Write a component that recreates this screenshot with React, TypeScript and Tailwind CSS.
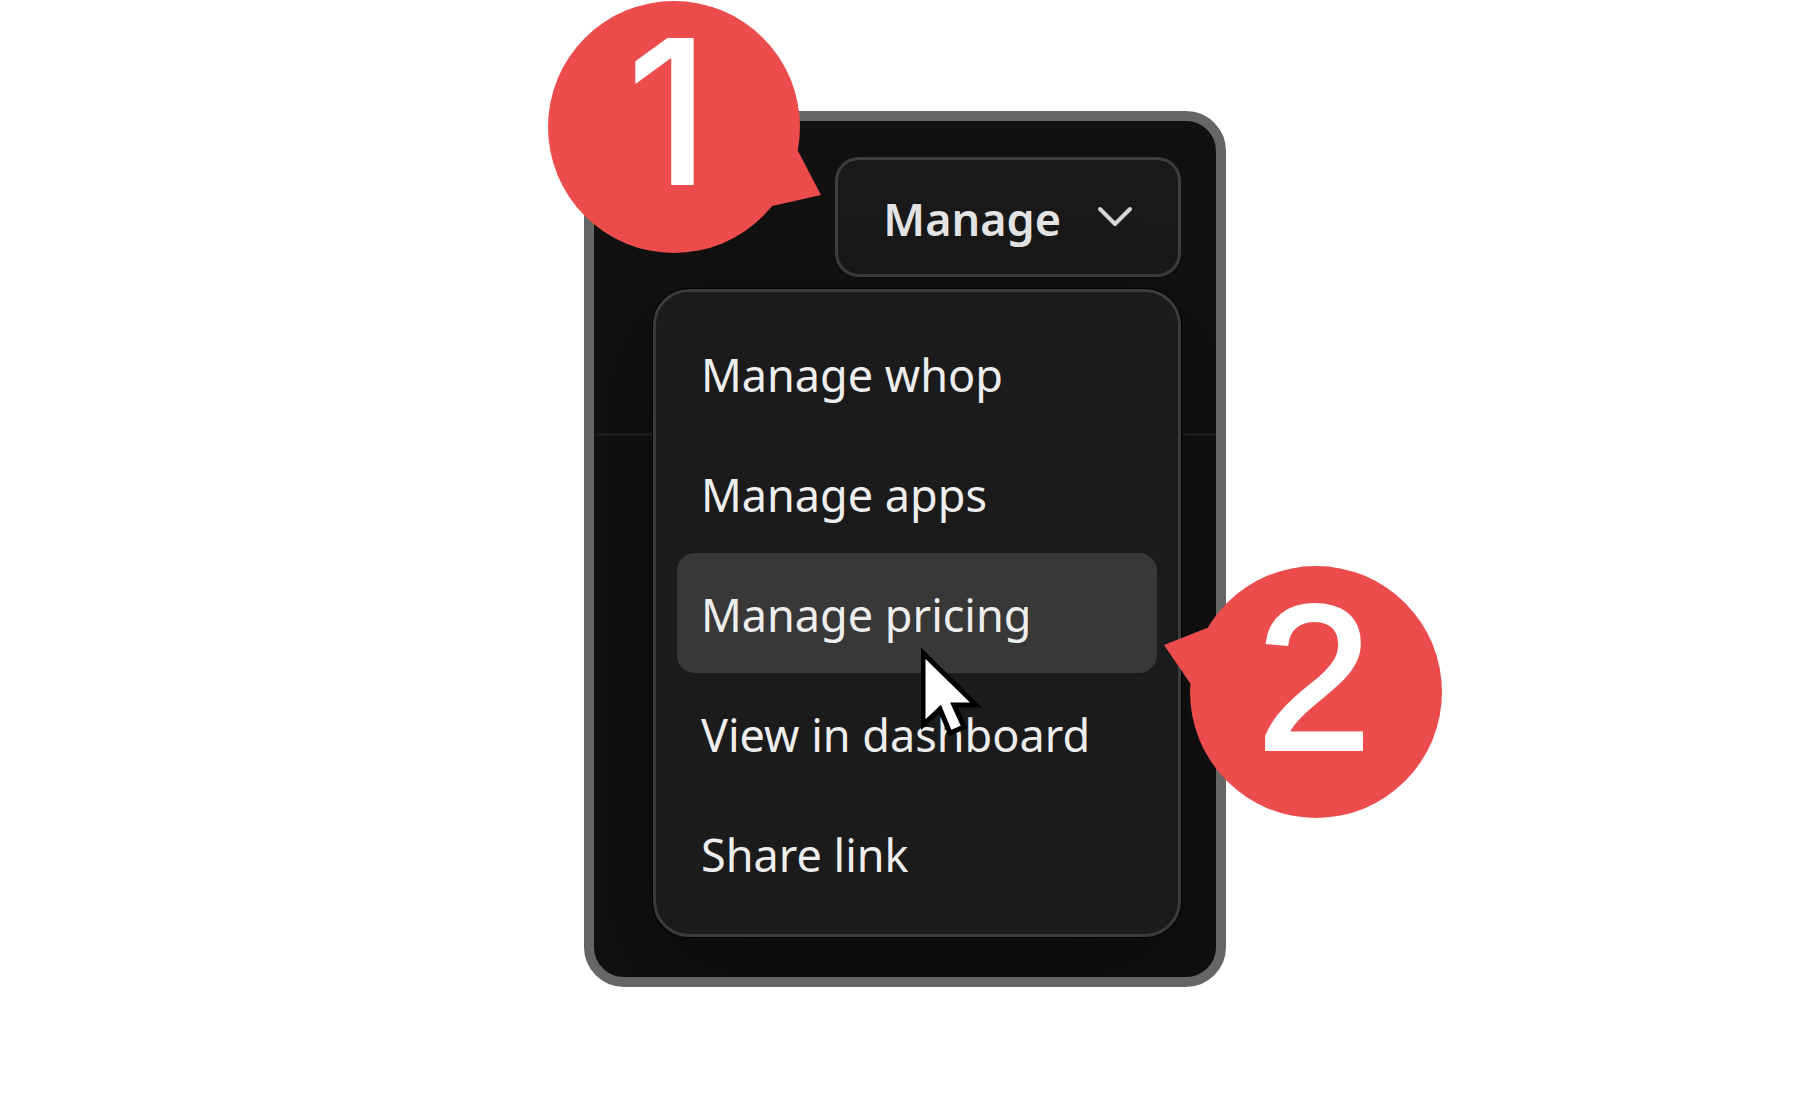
import { useState } from 'react';

const items = ['Manage whop', 'Manage apps', 'Manage pricing', 'View in dashboard', 'Share link'];

export default function App() {
  const [open, setOpen] = useState(true);
  const [active, setActive] = useState('Manage pricing');

  return (
    <main className="flex min-h-screen items-center justify-center bg-white pr-0.5 font-['Noto_Sans','Open_Sans',sans-serif]">
      <section className="relative">
        <div className="relative flex flex-col items-end gap-3 overflow-hidden rounded-[40px] border-[10px] border-[#666666] bg-[#111111] pt-9 pr-[35px] pb-10 pl-[59px]">
          <hr className="absolute inset-x-0 top-[312px] border-t-[3px] border-[#1e1e1e]" />

          <button
            type="button"
            aria-expanded={open}
            onClick={() => setOpen(!open)}
            className="flex h-[120px] items-center gap-9 rounded-3xl border-[3px] border-[#3e3e3e] bg-[#191919] px-[45px] text-[45px] font-semibold text-[#e4e4e4]"
          >
            <span className="pt-1">Manage</span>
            <svg width="36" height="22" viewBox="0 0 36 22" fill="none">
              <path d="M3 3l15 15L33 3" stroke="#d6d6d6" strokeWidth="4" strokeLinecap="round" strokeLinejoin="round" />
            </svg>
          </button>

          {open && (
            <ul className="relative w-[528px] rounded-[36px] border-[3px] border-[#3b3b3b] bg-[#1b1b1b] p-[21px] shadow-[0_0_0_1px_#000000,0_36px_96px_rgba(0,0,0,0.4)]">
              {items.map((item) => (
                <li key={item}>
                  <button
                    type="button"
                    onClick={() => setActive(item)}
                    className={`flex h-[120px] w-full items-center rounded-[18px] px-6 pt-1 text-[45px] text-[#eeeeee] ${
                      item === active ? 'bg-[#383838]' : ''
                    }`}
                  >
                    {item}
                  </button>
                </li>
              ))}
            </ul>
          )}
        </div>

        <svg width="61" height="90" viewBox="0 0 61 90" className="pointer-events-none absolute top-[536px] left-[337px]">
          <path d="M2 6v72l17-16 10 24 14-6-10-22h22z" fill="#ffffff" stroke="#000000" strokeWidth="5" />
        </svg>

        <div className="absolute -top-[111px] -left-9">
          <svg width="274" height="254" viewBox="0 0 274 254" fill="#ec4c4c">
            <circle cx="126" cy="127" r="126" />
            <path d="M250 151l23 44-49 11-40-50z" />
          </svg>
          <span className="absolute top-0 left-0 flex h-[224px] w-[240px] items-center justify-center font-['Inter',sans-serif] text-[202px] leading-none font-medium text-white">
            1
          </span>
        </div>

        <div className="absolute top-[454px] -right-[216px]">
          <svg width="278" height="254" viewBox="0 0 278 254" fill="#ec4c4c">
            <circle cx="152" cy="127" r="126" />
            <path d="M43 63L0 80l26 38 50-20z" />
          </svg>
          <span className="absolute top-0 right-0 flex h-[226px] w-[256px] items-center justify-center font-['Liberation_Sans',Arial,sans-serif] text-[206px] leading-none text-white [-webkit-text-stroke:4px_#ffffff]">
            2
          </span>
        </div>
      </section>
    </main>
  );
}
